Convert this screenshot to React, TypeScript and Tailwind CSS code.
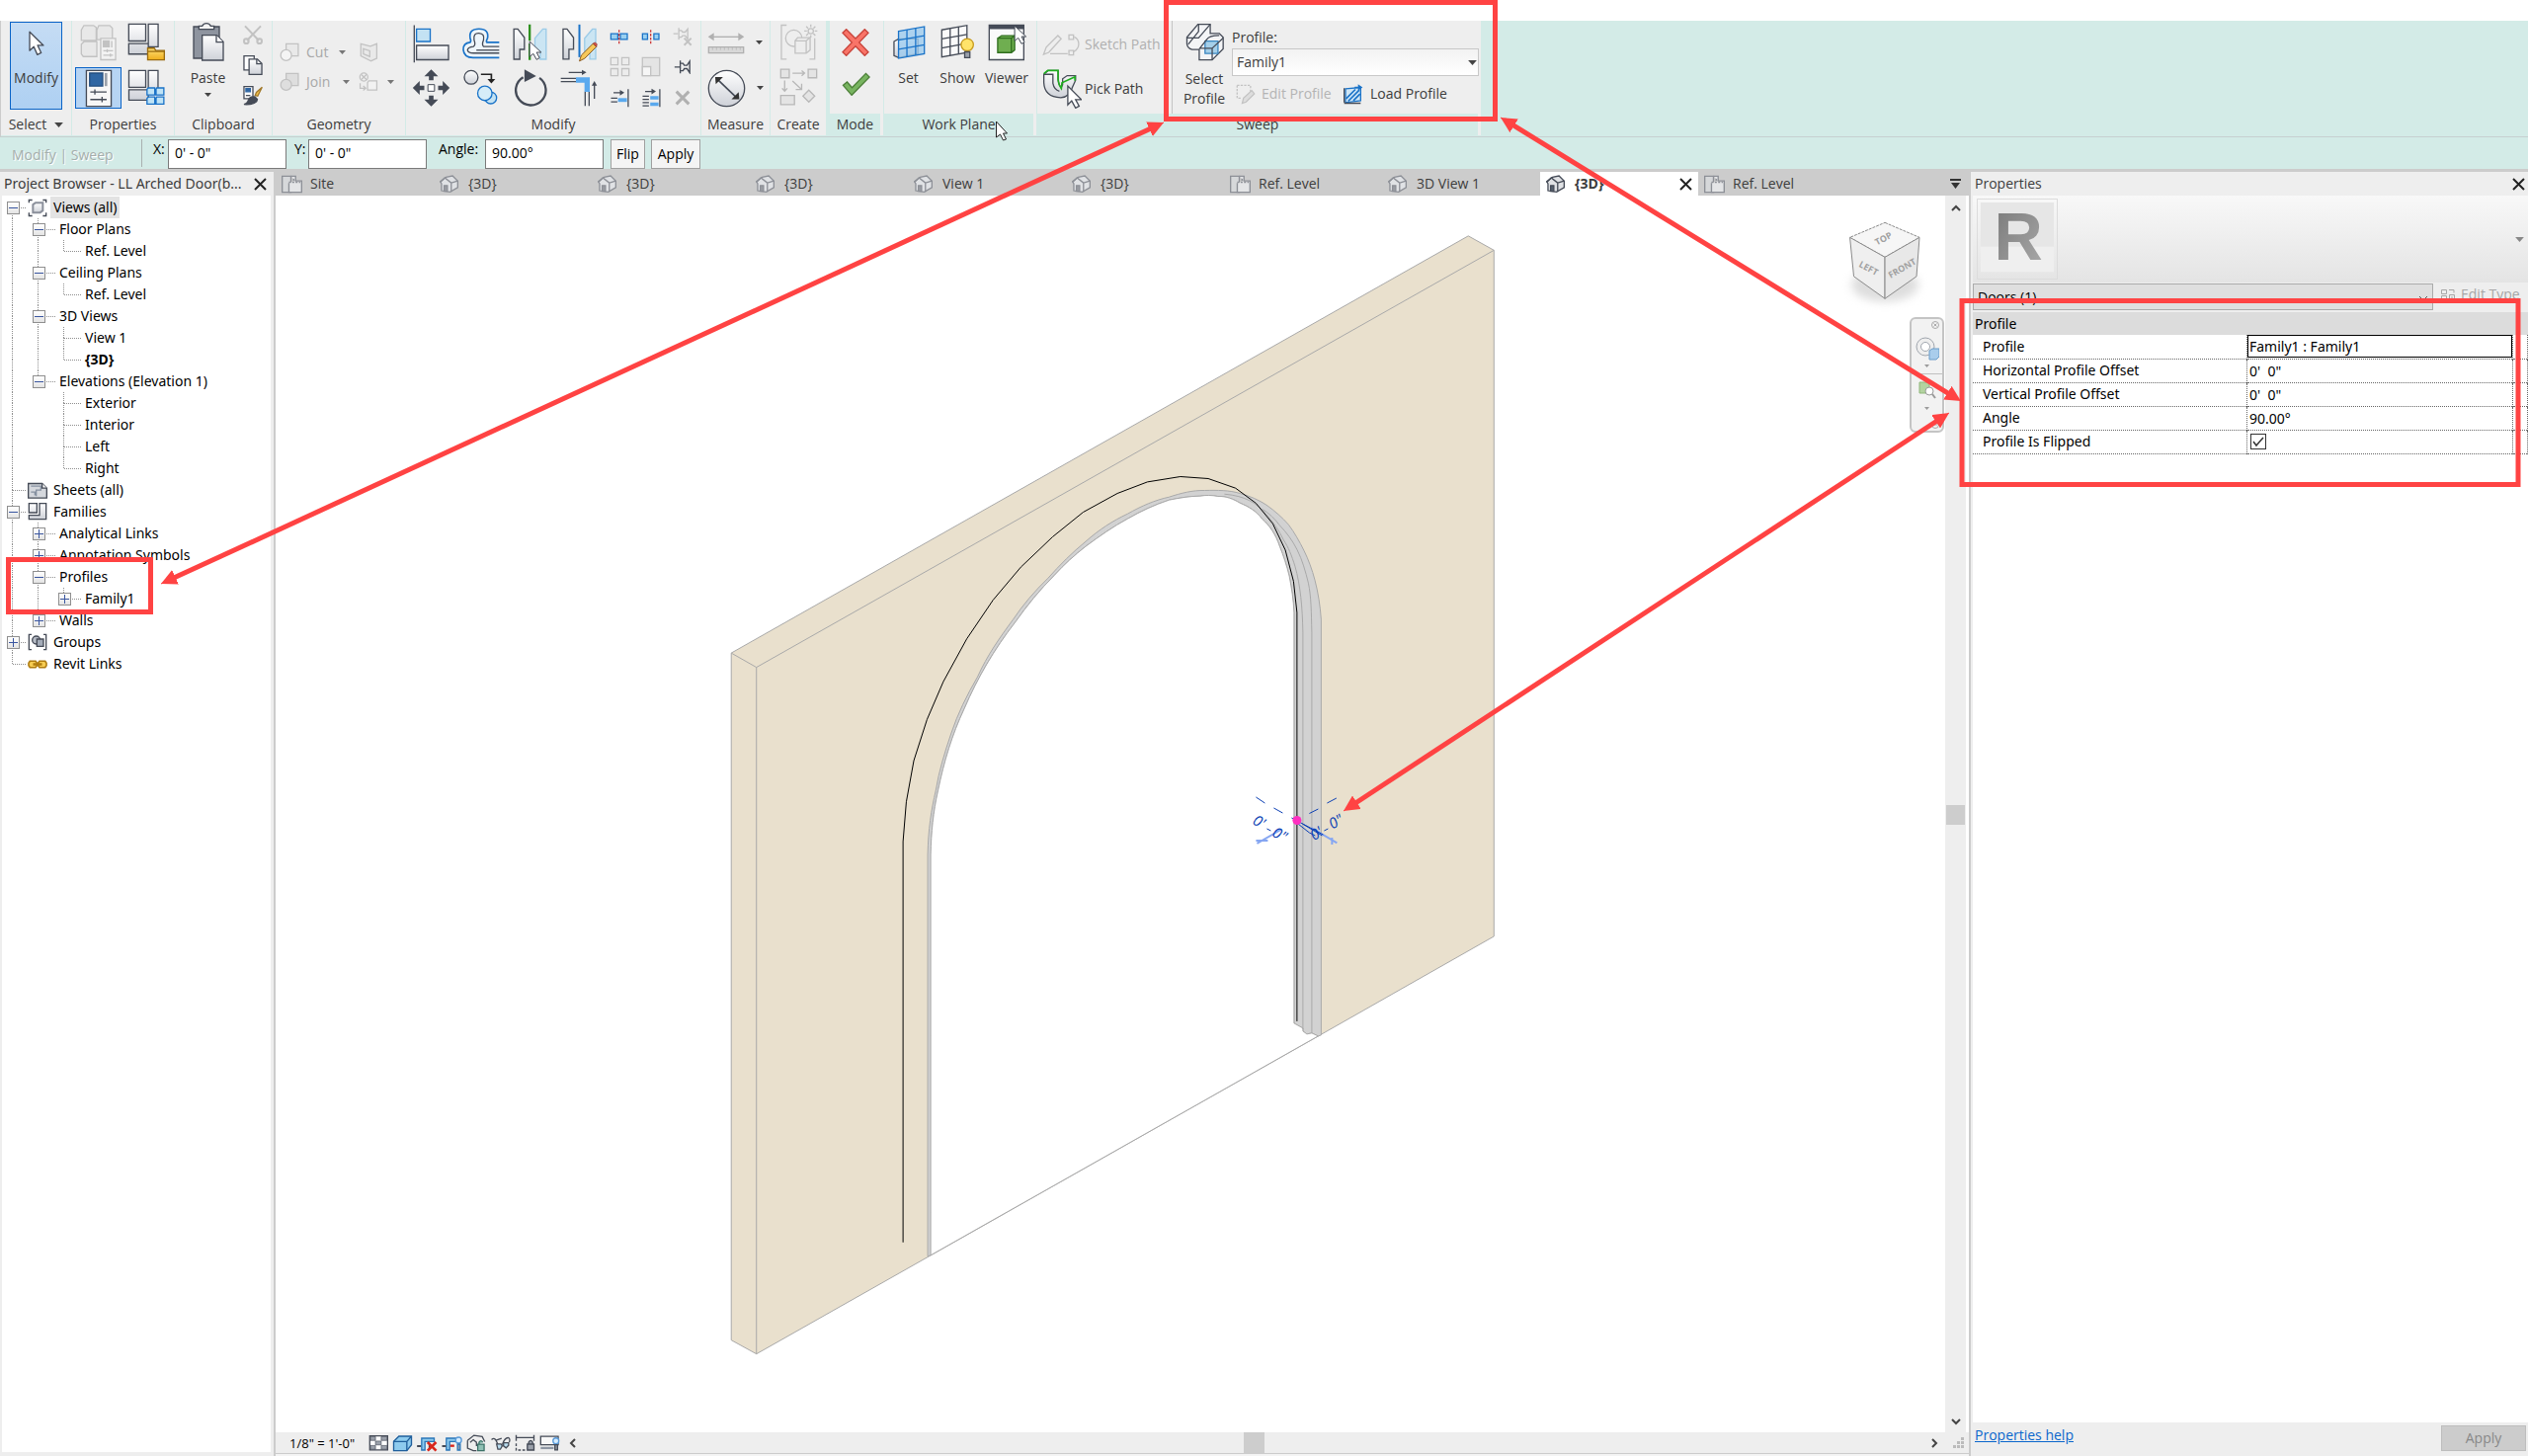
import React, { useState } from "react";
import clsx from "clsx";

const INK = "#454b57";
const DIM = "#c2c2c2";
const BLUE = "#1a73c8";

type PicProps = {
  box: string;
  w: number;
  h: number;
  stroke?: string;
  sw?: number;
  className?: string;
  children: React.ReactNode;
};

// icons are drawn on a grid three times finer than the screen
const Pic: React.FC<PicProps> = ({
  box,
  w,
  h,
  stroke = INK,
  sw = 4,
  className,
  children,
}) => (
  <svg
    viewBox={box}
    width={w}
    height={h}
    fill="none"
    stroke={stroke}
    strokeWidth={sw}
    aria-hidden="true"
    className={clsx("block shrink-0", className)}
  >
    {children}
  </svg>
);

const Caret: React.FC<{ className?: string; size?: number }> = ({
  className,
  size = 7,
}) => (
  <svg
    width={size}
    height={Math.ceil(size / 2)}
    viewBox="0 0 7 4"
    aria-hidden="true"
    className={clsx("block shrink-0", className)}
  >
    <path d="M0 0h7L3.500 4z" fill="#444" />
  </svg>
);

const CloseX: React.FC = () => (
  <svg width="13" height="13" viewBox="0 0 13 13" aria-hidden="true">
    <path d="M1 1l11 11M12 1L1 12" stroke="#222" strokeWidth="2" />
  </svg>
);

const Defs: React.FC = () => (
  <svg width="0" height="0" className="absolute" aria-hidden="true">
    <defs>
      <linearGradient id="paper" x1="0" y1="0" x2="0" y2="1">
        <stop offset="0" stopColor="#ffffff" />
        <stop offset="1" stopColor="#ced1d8" />
      </linearGradient>
      <linearGradient id="gold" x1="0" y1="0" x2="0" y2="1">
        <stop offset="0" stopColor="#ffe178" />
        <stop offset="1" stopColor="#eeae1c" />
      </linearGradient>
      <linearGradient id="rshade" x1="0" y1="0" x2="1" y2="1">
        <stop offset="0" stopColor="#777" />
        <stop offset="1" stopColor="#aaa" />
      </linearGradient>
    </defs>
  </svg>
);

/* ---------- ribbon ---------- */

type PanelProps = {
  title: React.ReactNode;
  className?: string;
  tinted?: boolean;
  children: React.ReactNode;
};

const Panel: React.FC<PanelProps> = ({ title, className, tinted, children }) => (
  <section className={clsx("flex shrink-0 flex-col bg-[#eeeeee]", className)}>
    <div className="flex h-[94px]">{children}</div>
    <h2
      className={clsx(
        "flex h-[22px] items-center justify-center",
        tinted && "mr-[3px] bg-[#d3ebe7]"
      )}
    >
      {title}
    </h2>
  </section>
);

const Tool: React.FC<{
  label: string;
  className?: string;
  children: React.ReactNode;
}> = ({ label, className, children }) => (
  <button
    type="button"
    aria-label={label}
    className={clsx("flex items-center justify-center", className)}
  >
    {children}
  </button>
);

const SelectPanel: React.FC = () => (
  <Panel
    className="w-[71px]"
    title={
      <>
        Select <Caret className="ml-2" size={9} />
      </>
    }
  >
    <button
      type="button"
      className="mt-px ml-[9px] flex h-[89px] w-[53px] flex-col items-center border border-[#0a64c8] bg-linear-to-b from-[#c5dcf4] to-[#aed0f2] pt-2"
    >
      <Pic box="84 92 52 80" w={17} h={26} sw={4}>
        <path
          d="M90 96v58l13-12 11 25 12-6-11-23h18z"
          fill="#fff"
          strokeLinejoin="round"
        />
      </Pic>
      <span className="mt-3">Modify</span>
    </button>
  </Panel>
);

const PropertiesPanel: React.FC = () => (
  <Panel className="w-[103px]" title="Properties">
    <div className="grid h-[89px] grid-cols-[47px_47px] grid-rows-[43px_42px] gap-x-[2px] gap-y-1 pl-[3px]">
      <Tool label="Type Properties">
        <Pic box="238 70 116 118" w={38} h={39} stroke={DIM}>
          <path d="M250 78h30l8 6v40h-46V92zM296 78h34l8 8v36h-48V92zM250 128h40v46h-42l-6-8v-30z" fill="#e8e8e8" />
          <path d="M302 118h46v66h-46z" fill="#f2f2f2" />
          <path d="M310 126h18v18h-18z" fill={DIM} />
          <path d="M336 126v20M310 156h30M310 170h30M322 151v10M332 165v10" />
        </Pic>
      </Tool>
      <Tool label="Family Category">
        <Pic box="386 70 118 118" w={39} h={39}>
          <path d="M390 74h52v52h-52zM450 74h30v70h-30zM390 134h60v32h-60z" fill="url(#paper)" />
          <path d="M448 148h20l5 7h26v29h-51z" fill="url(#gold)" stroke="#9a6c10" />
          <path d="M448 158h52" stroke="#9a6c10" />
        </Pic>
      </Tool>
      <Tool
        label="Properties"
        className="border border-[#0a64c8] bg-[#b6d4f3]"
      >
        <Pic box="250 206 84 118" w={28} h={39}>
          <path d="M254 210h76v110h-76z" fill="#f7f7f7" />
          <path d="M264 218h40v40h-40z" fill="#2f66a3" stroke="#244f80" />
          <path d="M314 218v40" stroke="#9aa0aa" strokeWidth="8" />
          <path d="M266 276h50M266 299h50M280 268v16M302 291v16" />
        </Pic>
      </Tool>
      <Tool label="Family Types">
        <Pic box="386 208 118 116" w={39} h={38}>
          <path d="M390 212h52v52h-52zM450 212h30v60h-30zM390 272h60v32h-60z" fill="url(#paper)" />
          <path
            d="M450 266h20v22h-24v-18zM476 266h22v22h-24v-18zM450 294h20v22h-24v-18zM476 294h22v22h-24v-18z"
            fill="#bfe3f6"
            stroke={BLUE}
          />
        </Pic>
      </Tool>
    </div>
  </Panel>
);

const ClipboardPanel: React.FC = () => (
  <Panel className="w-[98px]" title="Clipboard">
    <button type="button" className="flex w-[67px] flex-col items-center pt-[2px]">
      <Pic box="582 70 102 120" w={34} h={40}>
        <path d="M588 82h78v96h-78z" fill="#8e949f" />
        <path d="M604 90V80h10q4-8 13-8t13 8h10v10z" fill="#f4f4f4" />
        <path d="M614 108h44l20 20v56h-64z" fill="url(#paper)" />
        <path d="M657 108v21h21" fill="#fff" />
      </Pic>
      <span className="mt-1 leading-[24px]">Paste</span>
      <Caret className="mt-[3px]" />
    </button>
    <div className="flex flex-col gap-[11px] pt-1 pl-[2px]">
      <Tool label="Cut to Clipboard">
        <Pic box="738 76 60 60" w={20} h={20} stroke={DIM} sw={6}>
          <path d="M744 80l42 44M792 80l-42 44" />
          <circle cx="748" cy="126" r="7" />
          <circle cx="788" cy="126" r="7" />
        </Pic>
      </Tool>
      <Tool label="Copy to Clipboard">
        <Pic box="738 170 60 62" w={20} h={20}>
          <path d="M740 172h32v44h-32z" fill="#fff" />
          <path d="M756 182h26l14 14v34h-40z" fill="url(#paper)" />
          <path d="M780 182v15h15" />
        </Pic>
      </Tool>
      <Tool label="Match Type">
        <Pic box="738 264 60 62" w={20} h={20}>
          <path d="M740 266h28v38h-28z" fill="#fff" />
          <path d="M746 272h14v10h-14z" fill="#2f66a3" stroke="#2f66a3" />
          <path d="M746 294h14" />
          <path d="M797 268l-18 16-4 10 8 2z" fill="#f2c04c" stroke="#a27a2c" />
          <path d="M740 322q10-2 14-14t20-10l8 8q-2 18-42 16z" fill={INK} />
        </Pic>
      </Tool>
    </div>
  </Panel>
);

const GeometryPanel: React.FC = () => (
  <Panel className="w-[134px]" title="Geometry">
    <div className="flex flex-col gap-[10px] pt-[22px] pl-[7px] text-[#a8a8a8]">
      <div className="flex h-5 items-center">
        <button type="button" className="flex w-[60px] items-center gap-[6px]">
          <Pic box="848 128 64 62" w={21} h={20} stroke={DIM}>
            <path d="M868 132h38v38h-38z" fill="#e9e9e9" />
            <circle cx="868" cy="168" r="17" fill="#f4f4f4" />
          </Pic>
          Cut
        </button>
        <Caret className="mr-[13px] opacity-70" />
        <Tool label="Cope">
          <Pic box="1094 122 60 62" w={20} h={20} stroke={DIM}>
            <path d="M1100 126l30 8 20-8v46l-18 8-32-16z" fill="#e9e9e9" />
            <path d="M1108 142l20 6v18l-20-8z" />
          </Pic>
        </Tool>
      </div>
      <div className="flex h-5 items-center">
        <button type="button" className="flex w-[64px] items-center gap-[6px]">
          <Pic box="848 218 64 62" w={21} h={20} stroke={DIM}>
            <path d="M868 222h38v38h-38z" fill="#dedede" />
            <circle cx="868" cy="258" r="17" fill="#dedede" />
          </Pic>
          Join
        </button>
        <Caret className="mr-[9px] opacity-70" />
        <Tool label="Split Face">
          <Pic box="1094 214 62 64" w={20} h={20} stroke={DIM}>
            <circle cx="1110" cy="230" r="13" />
            <path d="M1101 221l18 18M1119 221l-18 18M1098 250v16h16M1108 259l8 7-8 7" />
            <path d="M1126 242h26v30h-30v-24z" fill="#f2f2f2" />
          </Pic>
        </Tool>
        <Caret className="ml-[9px] opacity-70" />
      </div>
    </div>
  </Panel>
);

const ModifyPanel: React.FC = () => (
  <Panel className="w-[298px]" title="Modify">
    <div className="grid h-[90px] grid-cols-[50px_50px_50px_50px] grid-rows-2">
      <Tool label="Align">
        <Pic box="50 72 118 120" w={39} h={40}>
          <path d="M57 76v114" />
          <path d="M64 88h42v38H64z" fill="#c3e2f3" stroke={BLUE} />
          <path d="M64 138h98v44H64z" fill="url(#paper)" />
        </Pic>
      </Tool>
      <Tool label="Offset">
        <Pic box="198 80 118 104" w={39} h={35}>
          <path
            d="M314 130h-38q-3-4 2-12 6-29-26-29t-27 29q4 8 0 12-22 2-21 23 2 24 30 24h80"
            stroke={BLUE}
            fill="#eef6fb"
            strokeWidth="5"
          />
          <path d="M314 143h-48q-6-6 0-20 4-20-14-21t-15 21q6 16-2 20-18 2-18 11 2 9 18 9h79" />
          <path d="M314 154h-70" />
        </Pic>
      </Tool>
      <Tool label="Mirror Pick Axis">
        <Pic box="352 72 110 120" w={37} h={40}>
          <path d="M358 88h12l20 26v36h-14v30h-18z" fill="url(#paper)" />
          <path d="M456 88h-10l-24 28v40h16v24h18z" fill="#cbe5f3" stroke="#9bcbe8" />
          <path d="M406 74v116" stroke="#2f9120" strokeWidth="7" strokeDasharray="50 8" />
          <path d="M406 126v46l11-9 10 18 9-5-9-17h14z" fill="#fff" strokeWidth="3" />
        </Pic>
      </Tool>
      <Tool label="Mirror Draw Axis">
        <Pic box="498 72 112 120" w={37} h={40}>
          <path d="M504 88h12l20 26v36h-14v30h-18z" fill="url(#paper)" />
          <path d="M604 88h-10l-24 28v40h16v24h18z" fill="#cbe5f3" stroke="#9bcbe8" />
          <path d="M554 74v100" stroke={BLUE} strokeWidth="6" />
          <path d="M554 186l6-18 36-36 10 10-36 36z" fill="#f7c85a" stroke="#8a5a20" strokeWidth="3" />
          <path d="M596 132l10 10 2-8-6-5z" fill="#d9534a" stroke="#8a2a20" strokeWidth="2" />
        </Pic>
      </Tool>
      <Tool label="Move">
        <Pic box="54 204 116 120" w={39} h={40}>
          <path
            d="M112 208l21 21h-14v12h-14v-12H91zM112 320l21-21h-14v-12h-14v12H91zM56 264l21-21v14h14v14H77v14zM168 264l-21-21v14h-14v14h14v14z"
            fill={INK}
            stroke="none"
          />
          <path d="M102 254h20v20h-20z" fill="#fff" strokeWidth="3" />
        </Pic>
      </Tool>
      <Tool label="Copy">
        <Pic box="202 208 110 112" w={37} h={37}>
          <circle cx="228" cy="233" r="21" fill="url(#paper)" />
          <circle cx="288" cy="296" r="18" fill="#c3e2f3" stroke={BLUE} />
          <circle cx="270" cy="282" r="22" fill="#d5ecf8" stroke={BLUE} />
          <path d="M258 224h32v18" stroke="#222" strokeWidth="5" />
          <path d="M278 238h24l-12 14z" fill="#222" stroke="none" />
        </Pic>
      </Tool>
      <Tool label="Rotate">
        <Pic box="354 206 106 118" w={35} h={39}>
          <path d="M386 234a46 46 0 1 0 50 2" strokeWidth="7" />
          <path d="M390 210l36 20-36 18z" fill={INK} stroke="none" />
        </Pic>
      </Tool>
      <Tool label="Trim to Corner">
        <Pic box="498 208 114 114" w={38} h={38}>
          <path d="M500 236h46M500 246h46" />
          <path d="M574 276v44M586 276v44" />
          <path d="M546 241h34v36" stroke="#5aa9ee" strokeWidth="16" />
          <path d="M524 218h46M602 298v-44" />
          <path d="M564 210l14 8-14 8zM594 258l8-14 8 14z" fill={INK} stroke="none" />
        </Pic>
      </Tool>
    </div>
    <div className="grid h-[94px] grid-cols-[32px_32px_32px] grid-rows-[31px_31px_31px]">
      <Tool label="Split Element">
        <Pic box="652 84 62 50" w={20} h={16}>
          <path d="M656 100h22v18h-22zM686 100h22v18h-22z" fill="#9bd0f0" stroke={BLUE} />
          <path d="M682 88v44" stroke="#c33" strokeDasharray="8 4" />
        </Pic>
      </Tool>
      <Tool label="Split with Gap">
        <Pic box="744 84 62 50" w={20} h={16}>
          <path d="M748 100h16v18h-16zM784 100h16v18h-16z" fill="#9bd0f0" stroke={BLUE} />
          <path d="M774 88v44" stroke="#c33" strokeDasharray="8 4" />
        </Pic>
      </Tool>
      <Tool label="Unpin">
        <Pic box="840 76 62 62" w={20} h={20} stroke={DIM}>
          <path d="M842 98h14M859 80v36M859 88h8l4 5h8l8-10v32l-8-11h-8l-4 5h-8" />
          <path d="M876 112l22 22M898 112l-22 22" strokeWidth="6" />
        </Pic>
      </Tool>
      <Tool label="Array">
        <Pic box="652 168 64 64" w={21} h={21} stroke={DIM}>
          <path d="M656 172h22v22h-22zM690 172h22v22h-22zM656 206h22v22h-22zM690 206h22v22h-22z" fill="#ececec" />
        </Pic>
      </Tool>
      <Tool label="Scale">
        <Pic box="746 168 62 64" w={20} h={21} stroke={DIM}>
          <path d="M750 172h54v56h-54z" fill="#e4e4e4" />
          <path d="M750 200h26v28h-26z" fill="#f6f6f6" />
        </Pic>
      </Tool>
      <Tool label="Pin">
        <Pic box="840 178 52 44" w={18} h={15}>
          <path d="M842 201h16M859 182v38M859 190h8l4 6h8l8-12v34l-8-12h-8l-4 6h-8" />
        </Pic>
      </Tool>
      <Tool label="Trim Single">
        <Pic box="652 262 64 62" w={21} h={20}>
          <path d="M664 277h24M710 266v56M656 294h20M656 306h20" />
          <path d="M684 268l14 9-14 9z" fill={INK} stroke="none" />
          <path d="M678 300h28" stroke="#5aa9ee" strokeWidth="12" />
        </Pic>
      </Tool>
      <Tool label="Trim Multiple">
        <Pic box="746 262 64 62" w={21} h={20}>
          <path d="M758 273h24M804 266v56M750 288h20M750 298h20M750 308h20M750 318h20" />
          <path d="M778 264l14 9-14 9z" fill={INK} stroke="none" />
          <path d="M774 293h26M774 313h26" stroke="#5aa9ee" strokeWidth="11" />
        </Pic>
      </Tool>
      <Tool label="Delete">
        <Pic box="846 270 48 48" w={16} h={16} stroke="#b0b0b0" sw={9}>
          <path d="M851 275l38 38M889 275l-38 38" />
        </Pic>
      </Tool>
    </div>
  </Panel>
);

const MeasurePanel: React.FC = () => (
  <Panel className="w-[69px]" title="Measure">
    <div className="flex flex-col gap-2 pl-[6px]">
      <div className="flex h-[40px] items-center gap-[11px] pt-1">
        <Tool label="Measure">
          <Pic box="948 92 114 72" w={38} h={24} stroke="#b0b0b0">
            <path d="M960 111h90" />
            <path d="M950 111l18-12v24zM1060 111l-18-12v24z" fill="#b0b0b0" stroke="none" />
            <path d="M952 142h106v18H952z" fill="#d8d8d8" />
            <path d="M964 142v9M976 142v9M988 142v9M1000 142v9M1012 142v9M1024 142v9M1036 142v9M1048 142v9" strokeWidth="2" />
          </Pic>
        </Tool>
        <Caret />
      </div>
      <div className="flex h-[40px] items-center gap-[11px]">
        <Tool label="Dimension">
          <Pic box="948 208 118 118" w={39} h={39}>
            <circle cx="1007" cy="267" r="55" fill="url(#paper)" />
            <path d="M980 240l56 54" strokeWidth="5" />
            <path d="M972 232h24l-22 22zM1046 300h-24l22-22z" fill="#333" stroke="none" />
          </Pic>
        </Tool>
        <Caret />
      </div>
    </div>
  </Panel>
);

const CreatePanel: React.FC = () => (
  <Panel className="w-[56px]" title="Create">
    <div className="flex w-full flex-col items-center gap-[6px] pt-[3px]">
      <Tool label="Create Group">
        <Pic box="1162 74 118 114" w={39} h={38} stroke={DIM}>
          <path d="M1184 78h-16v104h16M1254 182h16v-64" />
          <circle cx="1206" cy="118" r="25" />
          <path d="M1218 116h38v38l-12 10h-34v-38z" fill="#ededed" />
          <path d="M1210 126h34v38M1244 126l12-10" />
          <circle cx="1258" cy="96" r="8" />
          <path d="M1258 76v8M1258 108v8M1238 96h8M1270 96h8M1244 82l6 6M1272 82l-6 6M1244 110l6-6M1272 110l-6-6" />
        </Pic>
      </Tool>
      <Tool label="Create Similar">
        <Pic box="1158 204 118 120" w={39} h={40} stroke="#b8b8b8">
          <path d="M1162 210h26v26h-26zM1246 210h26v26h-26zM1162 290h42v28h-42zM1248 274l18 18-18 18-18-18z" fill="#e4e4e4" />
          <path d="M1198 222h36M1226 214l9 8-9 8M1174 244v32M1166 268l8 9 8-9M1198 246l26 24M1226 254v18h-18" />
        </Pic>
      </Tool>
    </div>
  </Panel>
);

const ModePanel: React.FC = () => (
  <Panel className="w-[54px]" title="Mode" tinted>
    <div className="flex w-full flex-col items-center gap-4 pt-2 pr-[2px]">
      <Tool label="Cancel Edit Mode">
        <Pic box="94 88 84 84" w={28} h={28} stroke="#c9453c" sw={4}>
          <path
            d="M97 101l11-11 28 28 28-28 11 11-28 29 28 29-11 11-28-29-28 29-11-11 28-29z"
            fill="#f97468"
          />
        </Pic>
      </Tool>
      <Tool label="Finish Edit Mode">
        <Pic box="94 230 86 72" w={29} h={24} stroke="#4c7f38" sw={4}>
          <path d="M98 270l12-10 15 17 42-43 11 11-54 55z" fill="#78b460" />
        </Pic>
      </Tool>
    </div>
  </Panel>
);

const WorkPlanePanel: React.FC = () => (
  <Panel className="w-[154px]" title="Work Plane" tinted>
    <button type="button" className="flex w-[49px] flex-col items-center pt-[3px]">
      <Pic box="244 82 104 110" w={34} h={38}>
        <path d="M250 134l14-8h60v46l-60 12-14-6z" fill="url(#paper)" />
        <path d="M264 102l80-14v84l-80 14z" fill="#9ccbee" fillOpacity="0.8" stroke={BLUE} />
        <path d="M264 130l80-14M264 158l80-14M290 97v84M317 92v84" stroke={BLUE} />
      </Pic>
      <span className="mt-[5px] leading-[24px]">Set</span>
    </button>
    <button type="button" className="flex w-[50px] flex-col items-center pt-[3px]">
      <Pic box="392 82 104 110" w={34} h={38}>
        <path d="M396 98l78-14v84l-78 14z" fill="#fafafa" />
        <path d="M396 126l78-14M396 154l78-14M422 94v84M448 88v84" />
        <circle cx="475" cy="144" r="19" fill="#ffe36a" stroke="#c79a1c" />
        <path d="M467 166h16v18h-16z" fill="#9aa0aa" />
      </Pic>
      <span className="mt-[5px] leading-[24px]">Show</span>
    </button>
    <button type="button" className="flex w-[50px] flex-col items-center pt-[3px]">
      <Pic box="538 76 118 114" w={39} h={38}>
        <path d="M542 80h106v106H542z" fill="#fafafa" />
        <path d="M542 86h106" strokeWidth="12" />
        <path d="M568 120l12-8h40v44l-10 8h-42z" fill="#6fae50" stroke="#2f6e1e" />
        <path d="M568 120h42v44M610 120l10-8" stroke="#2f6e1e" />
        <path d="M620 82v46l11-9 10 18 9-5-9-17h14z" fill="#fff" strokeWidth="3" />
      </Pic>
      <span className="mt-[5px] leading-[24px]">Viewer</span>
    </button>
  </Panel>
);

const SweepPanel: React.FC = () => {
  const [profile, setProfile] = useState("Family1");
  return (
    <Panel className="w-[449px]" title="Sweep" tinted>
      <div className="flex w-[137px] flex-col border-r border-[#c4c4c4] pl-[5px]">
        <button type="button" className="flex h-[48px] items-center gap-1 text-[#b0b0b0]">
          <Pic box="706 98 118 70" w={39} h={23} stroke={DIM}>
            <path d="M710 162l8-22 36-36 10 10-38 42z" fill="#eee" />
            <path d="M730 160h54M804 108q14 6 14 22t-16 24" />
            <path d="M788 102h14v14h-14zM788 150h14v14h-14z" />
          </Pic>
          Sketch Path
        </button>
        <button type="button" className="flex h-[42px] items-center gap-[3px]">
          <Pic box="704 208 120 122" w={40} h={40}>
            <path
              d="M708 224l14-12h30v30q2 16 10 22l4-8v-18l14-10h26v14l-10 22q-6 30-36 32-50-2-52-46z"
              fill="url(#paper)"
            />
            <path d="M708 224h28v28q4 20 20 24" />
            <path
              d="M708 222l12-10h32v28q2 18 10 28l2-18 40-18v12"
              stroke="#1fae1f"
              strokeWidth="5"
            />
            <path d="M782 260v58l12-12 12 22 11-6-11-20h18z" fill="#fff" />
          </Pic>
          Pick Path
        </button>
      </div>
      <button type="button" className="flex w-[60px] flex-col items-center pt-[3px] pl-1 leading-5">
        <Pic box="118 74 118 116" w={39} h={38}>
          <path
            d="M122 116l34-40h38v28h28l12 12v36l-34 34h-40v-32h-22q-14-4-16-18z"
            fill="#f3f4f6"
          />
          <path d="M178 128h40v38h-40z" fill="#a5cfe9" stroke="#3a86c0" />
          <path d="M122 118h36l36-42M158 76v22l-32 40M160 150h40v36M160 152l24-30q6-12 38-12M200 150l34-32" />
        </Pic>
        <span className="mt-2">
          Select
          <br />
          Profile
        </span>
      </button>
      <div className="flex w-[250px] flex-col">
        <label htmlFor="sweep-profile" className="pt-[7px] leading-5">
          Profile:
        </label>
        <div className="relative mt-px">
          <select
            id="sweep-profile"
            value={profile}
            onChange={(e) => setProfile(e.target.value)}
            className="block h-7 w-full appearance-none border border-[#c8c8c8] bg-linear-to-b from-[#f2f2f2] to-white pl-1"
          >
            <option>Family1</option>
          </select>
          <Caret className="absolute top-3 right-[2px]" size={9} />
        </div>
        <div className="flex h-[36px] items-center pl-1">
          <button type="button" className="flex w-[109px] items-center gap-[6px] text-[#b4b4b4]">
            <Pic box="270 250 62 64" w={20} h={21} stroke={DIM}>
              <path d="M274 254h42v20M274 254v40h12" strokeDasharray="7 4" />
              <path d="M290 310l4-16 26-24 8 10-26 26z" fill="#ddd" />
            </Pic>
            Edit Profile
          </button>
          <button type="button" className="flex items-center gap-[7px]">
            <Pic box="598 252 60 62" w={20} h={21} stroke={BLUE}>
              <path d="M604 266l46-4v40l-46 6z" fill="#cfe6f6" />
              <path d="M606 296l28-28M612 304l34-34M628 302l20-20M632 262h14" strokeWidth="5" />
              <path d="M642 252l14 10-14 10z" fill={BLUE} stroke="none" />
              <path d="M600 308v-44M600 310h50" stroke={INK} />
            </Pic>
            Load Profile
          </button>
        </div>
      </div>
    </Panel>
  );
};

const OptionsBar: React.FC = () => (
  <div className="flex h-[33px] border-t border-[#c6cfd0] bg-[#d3ebe7] pt-[2px] text-black">
    <span className="mt-1 h-6 w-[143px] pl-3 leading-6 text-[#a5aeac] [text-shadow:1px_1px_0_#fff]">
      Modify | Sweep
    </span>
    <span className="h-7 w-[12px] border-l border-[#a9b0af]" />
    <label htmlFor="ox" className="w-[15px] leading-5">
      X:
    </label>
    <input id="ox" defaultValue={`0' - 0"`} className="mr-2 h-[30px] w-[120px] border border-[#7a7a7a] bg-white px-[6px] pb-1" />
    <label htmlFor="oy" className="w-[14px] leading-5">
      Y:
    </label>
    <input id="oy" defaultValue={`0' - 0"`} className="mr-3 h-[30px] w-[120px] border border-[#7a7a7a] bg-white px-[6px] pb-1" />
    <label htmlFor="oangle" className="w-[47px] leading-5">
      Angle:
    </label>
    <input id="oangle" defaultValue="90.00°" className="mr-[7px] h-[30px] w-[120px] border border-[#7a7a7a] bg-white px-[6px] pb-1" />
    <button type="button" className="mr-[6px] h-[30px] w-[35px] border border-[#a0a0a0] bg-[#f4f4f4]">
      Flip
    </button>
    <button type="button" className="h-[30px] w-[50px] border border-[#a0a0a0] bg-[#f4f4f4]">
      Apply
    </button>
  </div>
);

/* ---------- project browser ---------- */

// one letter per column: "l" passing line, "t" branch, "e" last branch,
// "s" first branch, "-" empty
type Row = {
  guides: string;
  text: string;
  mark?: "+" | "-";
  icon?: React.ReactNode;
  bold?: boolean;
  selected?: boolean;
};

const viewsIcon = (
  <Pic box="84 114 60 56" w={20} h={19}>
    <path d="M88 126v-8h10M130 118h10v8M88 156v10h10M130 166h10v-10" />
    <path d="M100 132l8-6h22v24l-8 6h-22z" fill="url(#paper)" strokeWidth="6" stroke="#8b909b" />
  </Pic>
);

const sheetsIcon = (
  <Pic box="84 946 60 50" w={20} h={17}>
    <path d="M86 950h42l14 14v30H86z" fill="#d5d8dd" />
    <path d="M94 958h30v12h-14v18M94 976h12v10" stroke="#8590a0" />
    <path d="M128 950v14h14" fill="#fff" />
  </Pic>
);

const familiesIcon = (
  <Pic box="84 1010 60 54" w={20} h={18}>
    <path d="M88 1012h24v28H88zM120 1012h20v48H88v-12h32z" fill="url(#paper)" />
  </Pic>
);

const groupsIcon = (
  <Pic box="84 1394 60 54" w={20} h={18}>
    <path d="M96 1398h-8v46h8M132 1398h8v46h-8" />
    <circle cx="110" cy="1415" r="12" fill="#b9bec8" />
    <path d="M112 1412h20v22h-20z" fill="#a4acb9" />
  </Pic>
);

const linksIcon = (
  <Pic box="84 1472 60 28" w={20} h={9} stroke="#b07c10" sw={5}>
    <path d="M90 1476h18l4 6v8l-4 6H90l-4-6v-8zM120 1476h18l4 6v8l-4 6h-18l-4-6v-8z" fill="#f6cc52" />
    <path d="M100 1486h28" strokeWidth="8" />
  </Pic>
);

const rows: Row[] = [
  { guides: "s", text: "Views (all)", mark: "-", icon: viewsIcon, selected: true },
  { guides: "lt", text: "Floor Plans", mark: "-" },
  { guides: "lle", text: "Ref. Level" },
  { guides: "lt", text: "Ceiling Plans", mark: "-" },
  { guides: "lle", text: "Ref. Level" },
  { guides: "lt", text: "3D Views", mark: "-" },
  { guides: "llt", text: "View 1" },
  { guides: "lle", text: "{3D}", bold: true },
  { guides: "le", text: "Elevations (Elevation 1)", mark: "-" },
  { guides: "l-t", text: "Exterior" },
  { guides: "l-t", text: "Interior" },
  { guides: "l-t", text: "Left" },
  { guides: "l-e", text: "Right" },
  { guides: "t", text: "Sheets (all)", icon: sheetsIcon },
  { guides: "t", text: "Families", mark: "-", icon: familiesIcon },
  { guides: "lt", text: "Analytical Links", mark: "+" },
  { guides: "lt", text: "Annotation Symbols", mark: "+" },
  { guides: "lt", text: "Profiles", mark: "-" },
  { guides: "lle", text: "Family1", mark: "+" },
  { guides: "le", text: "Walls", mark: "+" },
  { guides: "t", text: "Groups", mark: "+", icon: groupsIcon },
  { guides: "e", text: "Revit Links", icon: linksIcon },
];

const Guide: React.FC<{ kind: string; mark?: "+" | "-" }> = ({ kind, mark }) => (
  <span className="grid h-[22px] w-[26px] shrink-0 place-items-center">
    <svg
      width="26"
      height="22"
      className="col-start-1 row-start-1 block overflow-visible"
      stroke="#8f8f8f"
      strokeDasharray="1 1"
      shapeRendering="crispEdges"
      aria-hidden="true"
    >
      {kind !== "-" && kind !== "s" && <line x1="12.5" x2="12.5" y1="0" y2="11" />}
      {"lts".includes(kind) && <line x1="12.5" x2="12.5" y1="11" y2="22" />}
      {"tes".includes(kind) && <line x1="13" x2="31" y1="11.5" y2="11.5" />}
    </svg>
    {mark && (
      <button
        type="button"
        aria-label={mark === "+" ? "Expand" : "Collapse"}
        className="relative col-start-1 row-start-1 block size-[13px] border border-[#8f8f8f] bg-linear-to-b from-white to-[#e4e4e4]"
      >
        <svg width="11" height="11" stroke="#3a56a0" className="block" aria-hidden="true">
          <path d={mark === "+" ? "M1 5.5h9M5.500 1v9" : "M1 5.500h9"} />
        </svg>
      </button>
    )}
  </span>
);

const ProjectBrowser: React.FC = () => (
  <aside className="flex w-[279px] shrink-0 flex-col border-r-2 border-[#cccccc] bg-[#eeeeee] font-['Noto_Sans',sans-serif]">
    <header className="flex h-6 shrink-0 items-center justify-between pr-[7px] pl-1">
      <h2 className="whitespace-nowrap">Project Browser - LL Arched Door(b...</h2>
      <button type="button" aria-label="Close">
        <CloseX />
      </button>
    </header>
    <div className="mr-[3px] ml-[2px] flex-1 bg-white pt-px text-black">
      <ul className="-ml-[2px]">
        {rows.map((row, index) => (
          <li key={index} className="flex h-[22px] items-center">
            {row.guides.split("").map((kind, i) => (
              <Guide
                key={i}
                kind={kind}
                mark={i === row.guides.length - 1 ? row.mark : undefined}
              />
            ))}
            {row.icon ? (
              <span className="relative w-[25px] bg-white pl-[2px]">{row.icon}</span>
            ) : (
              <span className="w-[5px]" />
            )}
            <span
              className={clsx(
                "flex h-full items-center px-[3px] whitespace-nowrap",
                row.bold && "font-bold",
                row.selected && "bg-[#e3e3e3]"
              )}
            >
              {row.text}
            </span>
          </li>
        ))}
      </ul>
    </div>
    <div className="h-1 shrink-0" />
  </aside>
);

/* ---------- drawing area ---------- */

const PlanIcon: React.FC = () => (
  <Pic box="854 530 62 56" w={21} h={19} stroke="#8d9097">
    <path d="M856 534h26v48h-26z" fill="#d6d8da" />
    <path d="M882 534h14v12M876 554v28h38v-34h-20" fill="#e4e5e7" />
    <path d="M876 552h34M890 542v12" strokeDasharray="6 4" />
  </Pic>
);

const HouseIcon: React.FC<{ active?: boolean }> = ({ active }) => (
  <Pic box="134 530 58 56" w={19} h={19} stroke={active ? INK : "#8d9097"}>
    <path d="M136 550l18-14 20-4 16 16v20l-24 14-26-4v-22z" fill="#e0e2e5" />
    <path d="M136 552l14-14 20 16v28M170 554l20-6" />
    <path d="M148 562h10v18h-10z" fill={active ? "#55606f" : "#9a9da3"} />
  </Pic>
);

const tabs = [
  { name: "Site", plan: true },
  { name: "{3D}" },
  { name: "{3D}" },
  { name: "{3D}" },
  { name: "View 1" },
  { name: "{3D}" },
  { name: "Ref. Level", plan: true },
  { name: "3D View 1" },
  { name: "{3D}", active: true },
  { name: "Ref. Level", plan: true },
];

const TabBar: React.FC = () => (
  <nav className="flex h-[24px] shrink-0 bg-[#cccccc]">
    {tabs.map((tab, index) => (
      <div
        key={index}
        className={clsx(
          "flex w-[160px] items-center justify-between",
          tab.active && "bg-white"
        )}
      >
        <button type="button" className={clsx("flex items-center pl-[6px]", tab.active && "font-bold")}>
          <span className="w-[29px]">
            {tab.plan ? <PlanIcon /> : <HouseIcon active={tab.active} />}
          </span>
          {tab.name}
        </button>
        {tab.active && (
          <button type="button" aria-label="Close view" className="pr-[6px]">
            <CloseX />
          </button>
        )}
      </div>
    ))}
    <button type="button" aria-label="More views" className="mr-2 ml-auto">
      <svg width="11" height="10" viewBox="0 0 11 10" aria-hidden="true">
        <path d="M0 0h11v2H0zM1 4h9L5.500 10z" fill="#333" />
      </svg>
    </button>
  </nav>
);

const Model: React.FC = () => (
  <svg viewBox="279 198 1691 1252" className="absolute inset-0 h-full w-full" fill="none">
    <g stroke="#a9a9a9" strokeWidth="1">
      <path d="M740.500 661L1487 238.500L1513 253V948L1336 1048.500L941 1272L766 1371L740.500 1357Z" fill="#e9e0cd" />
      <path d="M740.500 661L766 675.500V1371M766 675.500L1513 253" />
      <path
        d="M939.500 1272V865C940 840 943 820 947.700 800C951 780 956 764 963 743C970 722 979 704 990 685C1000 663 1012 646 1026 627C1036 612 1048 598 1061.500 585C1073 572 1086 559 1099.500 548C1113 536 1127 527 1142 520C1156 512 1170 506 1184 503C1196 499 1208 496 1220 496.300C1233 496 1245 496 1255.700 499.300C1266 502 1275 506 1282.500 511C1291 517 1299 524 1305 531C1311 539 1316 548 1320.500 557C1325 566 1329 577 1331.600 587C1335 600 1337 613 1338 627V1048L1335 1049L1328.500 1046L1323.500 1047L1319.500 1044V1041L1310.500 1036V620C1310 607 1308 595 1305.700 583C1303 572 1300 563 1296 553C1292 541 1286 532 1278 525C1272 517 1265 513 1255.700 509C1249 505 1242 502 1233.400 502.300C1227 501 1221 501 1215.500 502C1205 502 1194 504 1184 506C1169 511 1156 517 1142 525C1127 533 1113 543 1099.500 553C1088 562 1078 571 1068 582C1053 597 1040 613 1028 630C1007 657 990 686 976.700 717C964 744 956 771 950 800C945 822 943 843 942.800 865V1271Z"
        fill="#d2d2d2"
      />
      <path
        d="M942.500 1271V865C943 843 945 822 950 800C956 771 964 744 976.700 717C990 686 1007 657 1028 630C1040 613 1053 597 1068 582C1078 571 1088 562 1099.500 553C1113 543 1127 533 1142 525C1156 517 1169 511 1184 506C1194 504 1205 502 1215.500 502C1221 501 1227 501 1233.400 502.300C1242 502 1249 505 1255.700 509C1265 513 1272 517 1278 525C1286 532 1292 541 1296 553C1300 563 1303 572 1305.700 583C1308 595 1310 607 1310.500 620V1036L1319.500 1041V1044L1323.500 1047L1328.500 1046L1335 1049Z"
        fill="#fff"
      />
      <path d="M1319.500 1042V640C1319 615 1317 592 1311.500 573C1308 562 1305 554 1300 546.700C1295 536 1289 528 1282 520C1272 509 1262 502 1240 500" />
      <path d="M1328.500 1046V640C1328 620 1328 604 1325 590C1322 578 1319 567 1313.800 556.700C1309 547 1303 539 1296 531.700C1291 525 1285 519 1278 515" />
    </g>
    <path
      d="M914.500 1258V852L917.800 811.700L925.400 770L938.800 728.300L955.300 690L979 646.700L1005.700 607.300L1033.800 574L1066 543.300L1097 518.300L1131.600 499.300L1162 487.700L1195.400 482.300L1223.600 484.300L1251.300 494L1272 509.300L1289 530L1301.700 556.700L1310 588.300L1313.500 620V1034"
      stroke="#000"
    />
    <g stroke="#86a6f2" strokeWidth="2">
      <path d="M1272 851h12M1273 854L1298 839.500M1328 838l26 15.500M1349 848v7" />
    </g>
    <g stroke="#0b3fb4">
      <path d="M1272 807l9 6M1290 818l9 5M1353.500 808l-9.500 5M1335 819l-9 4.500M1308 828l32 17M1312 832l14 11 6 3M1319 834l20 12" />
      <path d="M1283 839l4 2M1341 841l4-2" />
    </g>
    <g fill="#0b3fb4" fontSize="15" fontStyle="italic" textAnchor="middle">
      <text x="0" y="5" transform="translate(1275 832) rotate(30)">0'</text>
      <text x="0" y="5" transform="translate(1296 845) rotate(30)">0"</text>
      <text x="0" y="5" transform="translate(1333 844) rotate(-30)">0'</text>
      <text x="0" y="5" transform="translate(1353 832) rotate(-30)">0"</text>
    </g>
    <circle cx="1313.500" cy="830.500" r="4.500" fill="#ff2fc0" />
    <g stroke="#8a8a8a" strokeLinejoin="round" fontSize="9" fontWeight="bold" textAnchor="middle">
      <ellipse cx="1909" cy="288" rx="34" ry="17" fill="#ddd" stroke="none" className="blur-[5px]" />
      <path d="M1909 225L1944 240L1909 260L1873.500 240Z" fill="#f6f6f6" strokeDasharray="3 1" />
      <path d="M1873.500 240L1909 260V302L1877.500 279.500Z" fill="#efefef" />
      <path d="M1944 240L1909 260V302L1941 279.500Z" fill="#e8e8e8" />
      <text stroke="none" fill="#a0a0a0" transform="translate(1909 244) rotate(-28)">TOP</text>
      <text stroke="none" fill="#a0a0a0" transform="translate(1891 274) rotate(28)">LEFT</text>
      <text stroke="none" fill="#a0a0a0" transform="translate(1928 274) rotate(-30)">FRONT</text>
    </g>
  </svg>
);

const NavBar: React.FC = () => (
  <div className="absolute top-[123px] right-px flex h-[117px] w-[35px] flex-col items-center rounded-md border-2 border-[#c4c4c4] bg-[#f2f2f2]">
    <svg width="8" height="8" viewBox="0 0 8 8" stroke="#aaa" fill="none" className="mt-[2px] mr-[3px] self-end">
      <circle cx="4" cy="4" r="3.500" />
      <path d="M2.500 2.500l3 3M5.500 2.500l-3 3" />
    </svg>
    <Tool label="Full Navigation Wheel" className="mt-2">
      <svg width="24" height="24" viewBox="0 0 24 24" fill="none" stroke="#a0a6ae">
        <circle cx="10" cy="10" r="9" fill="#eee" />
        <circle cx="10" cy="10" r="4.500" fill="#fff" />
        <path d="M14 14l3-2h7v8l-3 3h-7z" fill="#a9cdec" stroke="#6a9cc8" />
      </svg>
    </Tool>
    <Caret className="mt-1 opacity-50" size={5} />
    <span className="mt-[6px] w-full border-t border-[#c0c0c0]" />
    <Tool label="Zoom in Region" className="mt-[7px]">
      <svg width="18" height="18" viewBox="0 0 18 18" fill="none" stroke="#9a9a9a">
        <path d="M1 1h10v11H1z" fill="#b3d3a0" stroke="#8fb67a" />
        <circle cx="11" cy="10" r="4" fill="#fff" />
        <path d="M14 13l3 4" strokeWidth="2" />
      </svg>
    </Tool>
    <Caret className="mt-2 opacity-50" size={5} />
    <svg width="8" height="8" viewBox="0 0 8 8" stroke="#aaa" fill="none" className="mt-auto mr-[3px] mb-[2px] self-end">
      <circle cx="4" cy="4" r="3.500" />
      <path d="M2 4h4" />
    </svg>
  </div>
);

const Chevron: React.FC<{ d: string; label: string; className?: string }> = ({
  d,
  label,
  className,
}) => (
  <button type="button" aria-label={label} className={className}>
    <svg width="10" height="10" viewBox="0 0 10 10" fill="none" stroke="#444" strokeWidth="2">
      <path d={d} />
    </svg>
  </button>
);

const ViewControls: React.FC = () => (
  <div className="flex h-[21px] shrink-0 items-center bg-[#eeeeee] text-black">
    <button type="button" className="w-[94px] pl-[14px] text-left text-[13px] whitespace-nowrap">
      1/8" = 1'-0"
    </button>
    <div className="flex gap-1">
      <Tool label="Detail Level">
        <Pic box="308 62 62 50" w={20} h={17}>
          <path d="M312 66h56v44h-56z" fill="#fff" />
          <path d="M314 68h16v12h-16zM348 68h18v12h-18zM330 82h18v12h-18zM314 96h16v12h-16zM348 96h18v12h-18z" fill="#9aa0aa" strokeWidth="2" />
        </Pic>
      </Tool>
      <Tool label="Visual Style">
        <Pic box="382 62 62 54" w={21} h={18} stroke="#1f5f9c">
          <path d="M386 84l16-16h38v26l-14 18h-40z" fill="#8ecbee" />
          <path d="M386 84h40v28M426 84l14-16" />
        </Pic>
      </Tool>
      <Tool label="Crop View">
        <Pic box="452 62 62 54" w={21} h={18} stroke="#2a76b8">
          <path d="M466 74h38v10h-28v26h-10z" fill="#8ecbee" />
          <path d="M452 98h12M490 94v14" stroke={INK} strokeWidth="6" />
          <path d="M484 86l26 26M510 86l-26 26" stroke="#d8261c" strokeWidth="8" />
        </Pic>
      </Tool>
      <Tool label="Show Crop Region">
        <Pic box="526 62 62 54" w={21} h={18} stroke="#2a76b8">
          <path d="M540 74h34v10h-24v26h-10z" fill="#8ecbee" />
          <path d="M527 98h12" stroke={INK} strokeWidth="6" />
          <path d="M552 97h12" stroke="#d8261c" strokeWidth="7" />
          <circle cx="577" cy="80" r="9" fill="#d5ecff" stroke="#5a9ad8" />
          <path d="M574 92h8v18h-8z" fill="#9aa0aa" />
        </Pic>
      </Tool>
      <Tool label="Lock 3D View">
        <Pic box="602 60 62 58" w={20} h={19}>
          <path d="M606 82l20-16 26 4 8 16M606 82v24l18 8h10M614 88l10-8 10 8v12" fill="#eee" />
          <path d="M638 94h20v20h-20zM642 94v-6q6-10 12 0" fill="#8fc0b4" stroke="#3c7268" />
        </Pic>
      </Tool>
      <Tool label="Temporary Hide">
        <Pic box="676 64 64 50" w={21} h={16}>
          <path d="M680 78q8-8 14 2l6 12M714 94q8-24 20-22 6 4 2 14M694 80l18-6" />
          <path d="M696 92h14l4 6-6 10h-8zM718 88h16v8l-8 8-8-6z" fill="#b9dcee" />
        </Pic>
      </Tool>
      <Tool label="Reveal Constraints">
        <Pic box="752 62 62 54" w={21} h={18}>
          <path d="M756 64v18M810 64v18M758 72h50" />
          <path d="M756 90v20h28" strokeDasharray="8 5" />
          <path d="M790 92h20v18h-20zM794 92v-6q6-10 12 0v6" fill="#9aa0aa" />
        </Pic>
      </Tool>
      <Tool label="Worksharing Display">
        <Pic box="826 62 64 54" w={21} h={18}>
          <path d="M830 68h54v26h-54z" fill="#f8f8f8" />
          <path d="M830 104h40" strokeWidth="7" stroke="#8d96a4" />
          <circle cx="877" cy="82" r="9" fill="#d5ecff" stroke="#5a9ad8" />
          <path d="M874 94h8v16h-8z" fill="#9aa0aa" />
        </Pic>
      </Tool>
    </div>
    <Chevron d="M7 1L3 5L7 9" label="Scroll left" className="ml-2" />
    <div className="flex h-full flex-1 justify-center">
      <span className="h-full w-[21px] bg-[#cdcdcd]" />
    </div>
    <Chevron d="M3 1L7 5L3 9" label="Scroll right" className="mr-[14px]" />
    <svg width="12" height="12" viewBox="0 0 12 12" className="mr-1" aria-hidden="true">
      <path d="M8 0h3v3H8zM4 4h3v3H4zM8 4h3v3H8zM0 8h3v3H0zM4 8h3v3H4zM8 8h3v3H8z" fill="#bbb" />
    </svg>
  </div>
);

const Canvas: React.FC = () => (
  <main className="flex min-w-0 flex-1 flex-col">
    <TabBar />
    <div className="flex min-h-0 flex-1 bg-white">
      <div className="relative flex-1">
        <Model />
        <NavBar />
      </div>
      <div className="mr-[3px] flex w-[21px] flex-col items-center justify-between bg-[#eeeeee] pt-2 pb-[6px]">
        <Chevron d="M1 7L5 3L9 7" label="Scroll up" />
        <span className="h-5 w-[19px] bg-[#cdcdcd]" />
        <Chevron d="M1 3L5 7L9 3" label="Scroll down" />
      </div>
    </div>
    <ViewControls />
    <div className="h-[3px] shrink-0 border-t border-[#cccccc] bg-[#f4f4f4]" />
  </main>
);

/* ---------- properties ---------- */

const params = [
  { name: "Profile", value: "Family1 : Family1", focused: true },
  { name: "Horizontal Profile Offset", value: `0'  0"` },
  { name: "Vertical Profile Offset", value: `0'  0"` },
  { name: "Angle", value: "90.00°" },
];

const PropertiesPalette: React.FC = () => (
  <aside className="flex w-[566px] shrink-0 flex-col border-l-2 border-[#cccccc] bg-[#eeeeee] pl-[2px]">
    <header className="flex h-6 shrink-0 items-center justify-between pr-[3px] pl-[2px]">
      <h2>Properties</h2>
      <button type="button" aria-label="Close">
        <CloseX />
      </button>
    </header>
    <div className="flex h-[88px] shrink-0 items-center justify-between bg-linear-to-b from-[#f8f8f8] to-[#e4e4e4] pr-1 pl-1">
      <svg
        width="82"
        height="82"
        viewBox="0 0 82 82"
        className="overflow-visible border border-[#dcdcdc]"
        aria-hidden="true"
      >
        <path d="M3 3h76v46H3z" fill="#e6e6e6" />
        <path d="M3 49h76v26H3z" fill="#efefef" />
        <text x="17" y="62" fontSize="70" fontWeight="bold" fontFamily="Liberation Sans, sans-serif" fill="url(#rshade)">
          R
        </text>
      </svg>
      <Caret className="opacity-60" size={9} />
    </div>
    <div className="flex h-[30px] shrink-0 items-start">
      <div className="relative mt-px w-[466px]">
        <select
          aria-label="Instance filter"
          className="block h-[27px] w-full appearance-none border border-[#ababab] bg-[#dfdfdf] pl-1 text-black"
        >
          <option>Doors (1)</option>
        </select>
        <svg width="10" height="6" viewBox="0 0 10 6" fill="none" stroke="#555" className="absolute top-3 right-[5px]">
          <path d="M1 1l4 4 4-4" />
        </svg>
      </div>
      <button type="button" className="ml-[7px] flex h-[24px] items-center gap-[5px] whitespace-nowrap text-[#a6a6a6]">
        <svg width="16" height="13" viewBox="0 0 16 13" fill="none" stroke="#a6a6a6">
          <path d="M1.500 1.500h5v4h-5zM9 1.500h5v3M1.500 7.500h5v4h-5zM9.500 6.500h5v6h-5zM11 9h2" />
        </svg>
        Edit Type
      </button>
    </div>
    <div className="flex-1 bg-white">
      <table className="w-full table-fixed border-collapse text-left font-['Noto_Sans',sans-serif] text-black">
        <colgroup>
          <col />
          <col className="w-[269px]" />
          <col className="w-[15px]" />
        </colgroup>
        <thead>
          <tr>
            <th colSpan={3} className="h-[23px] bg-[#dcdcdc] p-0 pl-[2px] font-normal leading-5">
              Profile
            </th>
          </tr>
        </thead>
        <tbody>
          {params.map((param, index) => (
            <tr key={index} className="border-b border-dotted border-[#666]">
              <td className="h-6 p-0 pl-[10px] leading-5">
                <label htmlFor={"param" + index}>{param.name}</label>
              </td>
              <td className="border-x border-dotted border-[#666] p-0">
                <input
                  id={"param" + index}
                  defaultValue={param.value}
                  className={clsx(
                    "block h-[23px] w-full border whitespace-pre outline-none",
                    param.focused ? "border-black px-px" : "border-transparent px-px"
                  )}
                />
              </td>
              <td className="border-r border-dotted border-[#666] p-0" />
            </tr>
          ))}
          <tr className="border-b border-dotted border-[#666]">
            <td className="h-6 p-0 pl-[10px] leading-5">
              <label htmlFor="flipped">Profile Is Flipped</label>
            </td>
            <td className="border-x border-dotted border-[#666] p-0 pl-[3px]">
              <span className="relative block size-4">
                <input
                  id="flipped"
                  type="checkbox"
                  defaultChecked
                  className="peer block size-4 appearance-none border border-[#333] bg-white"
                />
                <svg
                  width="16"
                  height="16"
                  viewBox="0 0 16 16"
                  fill="none"
                  stroke="#333"
                  strokeWidth="1.500"
                  className="pointer-events-none absolute inset-0 hidden peer-checked:block"
                >
                  <path d="M3 8l3 4 7-8" />
                </svg>
              </span>
            </td>
            <td className="border-r border-dotted border-[#666] p-0" />
          </tr>
        </tbody>
      </table>
    </div>
    <footer className="flex h-[34px] shrink-0 items-start justify-between pt-[3px] pr-[2px] pl-[2px]">
      <a href="#help" className="text-[#0a66cc] underline">
        Properties help
      </a>
      <button type="button" className="h-[26px] w-[86px] border border-[#bdbdbd] bg-[#cccccc] text-[#888]">
        Apply
      </button>
    </footer>
  </aside>
);

/* ---------- call-outs ---------- */

const arrows = [
  { x1: 163, y1: 591, x2: 1178, y2: 124 },
  { x1: 1519, y1: 119, x2: 1985, y2: 406 },
  { x1: 1973, y1: 418, x2: 1360, y2: 821 },
];

const boxes = [
  { x: 1180.5, y: 2.5, width: 333, height: 118 },
  { x: 1986, y: 304.5, width: 563, height: 186 },
  { x: 8.5, y: 566.5, width: 144, height: 53 },
];

const Callouts: React.FC = () => (
  <svg
    viewBox="0 0 2559 1474"
    className="pointer-events-none absolute inset-0 h-full w-full"
    fill="none"
    stroke="#ff4343"
    strokeWidth="5"
    aria-hidden="true"
  >
    <defs>
      <marker
        id="head"
        viewBox="0 0 16 16"
        refX="16"
        refY="8"
        markerWidth="16"
        markerHeight="16"
        markerUnits="userSpaceOnUse"
        orient="auto-start-reverse"
      >
        <path d="M0 0L16 8L0 16z" fill="#ff4343" stroke="none" />
      </marker>
    </defs>
    {boxes.map((box, i) => (
      <rect key={i} {...box} />
    ))}
    {arrows.map(({ x1, y1, x2, y2 }, i) => {
      // the shaft stops inside the heads so that the tips stay sharp
      const len = Math.hypot(x2 - x1, y2 - y1);
      const dx = ((x2 - x1) / len) * 10;
      const dy = ((y2 - y1) / len) * 10;
      return (
        <g key={i}>
          <line x1={x1 + dx} y1={y1 + dy} x2={x2 - dx} y2={y2 - dy} />
          <line
            x1={x1}
            y1={y1}
            x2={x2}
            y2={y2}
            strokeWidth="1"
            markerStart="url(#head)"
            markerEnd="url(#head)"
          />
        </g>
      );
    })}
    <path d="M1008.500 123v16l4-3 3 6 3-1-3-6h4z" fill="#fff" stroke="#222" strokeWidth="1" />
  </svg>
);

const App: React.FC = () => (
  <div className="relative flex h-screen flex-col overflow-hidden bg-white font-['Open_Sans','Noto_Sans',sans-serif] text-[14px] leading-5 text-[#3c3c3c]">
    <Defs />
    <div className="h-[21px] shrink-0" />
    <div className="flex h-[117px] shrink-0 gap-px border-l border-[#cccccc] bg-[#d3ebe7] pb-px">
      <SelectPanel />
      <PropertiesPanel />
      <ClipboardPanel />
      <GeometryPanel />
      <ModifyPanel />
      <MeasurePanel />
      <CreatePanel />
      <span className="w-[2px]" />
      <ModePanel />
      <WorkPlanePanel />
      <SweepPanel />
    </div>
    <OptionsBar />
    <div className="h-[3px] shrink-0 bg-[#cccccc]" />
    <div className="flex min-h-0 flex-1">
      <ProjectBrowser />
      <Canvas />
      <PropertiesPalette />
    </div>
    <Callouts />
  </div>
);

export default App;
